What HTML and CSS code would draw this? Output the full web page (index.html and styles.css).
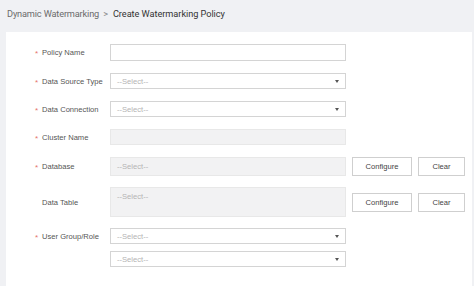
FILE: index.html
```html
<!DOCTYPE html>
<html>
<head>
<meta charset="utf-8">
<link rel="stylesheet" href="styles.css">
</head>
<body>
<div class="page">
  <div class="crumbs">
    <span class="crumb-parent">Dynamic Watermarking</span>
    <span class="crumb-sep">&gt;</span>
    <span class="crumb-current">Create Watermarking Policy</span>
  </div>
  <div class="card">
    <div class="row r-std">
      <div class="label req">Policy Name</div>
      <div class="field input"></div>
    </div>
    <div class="row r-std">
      <div class="label req">Data Source Type</div>
      <div class="field select"><span class="ph">--Select--</span><span class="caret"></span></div>
    </div>
    <div class="row r-std">
      <div class="label req">Data Connection</div>
      <div class="field select"><span class="ph">--Select--</span><span class="caret"></span></div>
    </div>
    <div class="row r-std">
      <div class="label req">Cluster Name</div>
      <div class="field disabled"></div>
    </div>
    <div class="row r-db">
      <div class="label req">Database</div>
      <div class="field disabled tall"><span class="ph">--Select--</span></div>
      <button class="btn btn-cfg">Configure</button>
      <button class="btn btn-clr">Clear</button>
    </div>
    <div class="row r-tbl">
      <div class="label">Data Table</div>
      <div class="field disabled area"><span class="ph">--Select--</span></div>
      <button class="btn btn-cfg">Configure</button>
      <button class="btn btn-clr">Clear</button>
    </div>
    <div class="row r-user">
      <div class="label req">User Group/Role</div>
      <div class="field select"><span class="ph">--Select--</span><span class="caret"></span></div>
    </div>
    <div class="row r-std">
      <div class="label"></div>
      <div class="field select"><span class="ph">--Select--</span><span class="caret"></span></div>
    </div>
  </div>
</div>
</body>
</html>
```

FILE: styles.css
```css
* { box-sizing: border-box; }
html, body { margin: 0; padding: 0; }
body {
  background: #f0f1f4;
  width: 474px;
  height: 286px;
  overflow: hidden;
  font-family: "Liberation Sans", Arial, sans-serif;
}
.page { display: flex; flex-direction: column; height: 286px; }
.crumbs {
  height: 32px;
  display: flex;
  align-items: center;
  padding-left: 7px;
  padding-bottom: 6px;
  font-family: Roboto, "Liberation Sans", sans-serif;
  font-size: 9.2px;
}
.crumb-parent { color: #6b6b6b; letter-spacing: -0.15px; }
.crumb-sep { color: #8a8a8a; margin: 0 5px 0 4px; }
.crumb-current { color: #333; letter-spacing: -0.05px; }
.card {
  flex: 1;
  background: #fff;
  margin-left: 6px;
  margin-right: 2px;
  padding-top: 12px;
  display: flex;
  flex-direction: column;
}
.row { display: flex; align-items: center; }
.r-std { margin-bottom: 12px; }
.r-db { margin-bottom: 11px; }
.r-tbl { margin-bottom: 11px; }
.r-user { margin-bottom: 7px; }
.label {
  width: 104px;
  flex-shrink: 0;
  white-space: nowrap;
  padding-left: 36px;
  font-size: 7.6px;
  color: #555;
  position: relative;
}
.label.req::before {
  content: "*";
  position: absolute;
  left: 29px;
  top: 1px;
  color: #e5756b;
  font-size: 8px;
}
.field {
  width: 236px;
  flex-shrink: 0;
  height: 16px;
  border: 1px solid #d4d4d4;
  background: #fff;
  display: flex;
  align-items: center;
  padding-left: 6px;
  position: relative;
}
.field.input { height: 17px; }
.field.disabled { background: #f2f2f3; border-color: #e8e8e8; }
.field.tall { height: 19px; }
.field.area { height: 30px; align-items: flex-start; padding-top: 4px; }
.ph { font-size: 7.6px; color: #b4b4b4; }
.caret {
  position: absolute;
  right: 6px;
  top: 6px;
  width: 0;
  height: 0;
  border-left: 2.5px solid transparent;
  border-right: 2.5px solid transparent;
  border-top: 3px solid #555;
}
.btn {
  height: 19px;
  flex-shrink: 0;
  border: 1px solid #cfcfcf;
  background: #fff;
  font-family: "Liberation Sans", Arial, sans-serif;
  font-size: 7.6px;
  color: #444;
  padding: 0;
  margin-left: 6px;
}
.btn-cfg { width: 60px; }
.btn-clr { width: 47px; margin-left: 6px; }
```
